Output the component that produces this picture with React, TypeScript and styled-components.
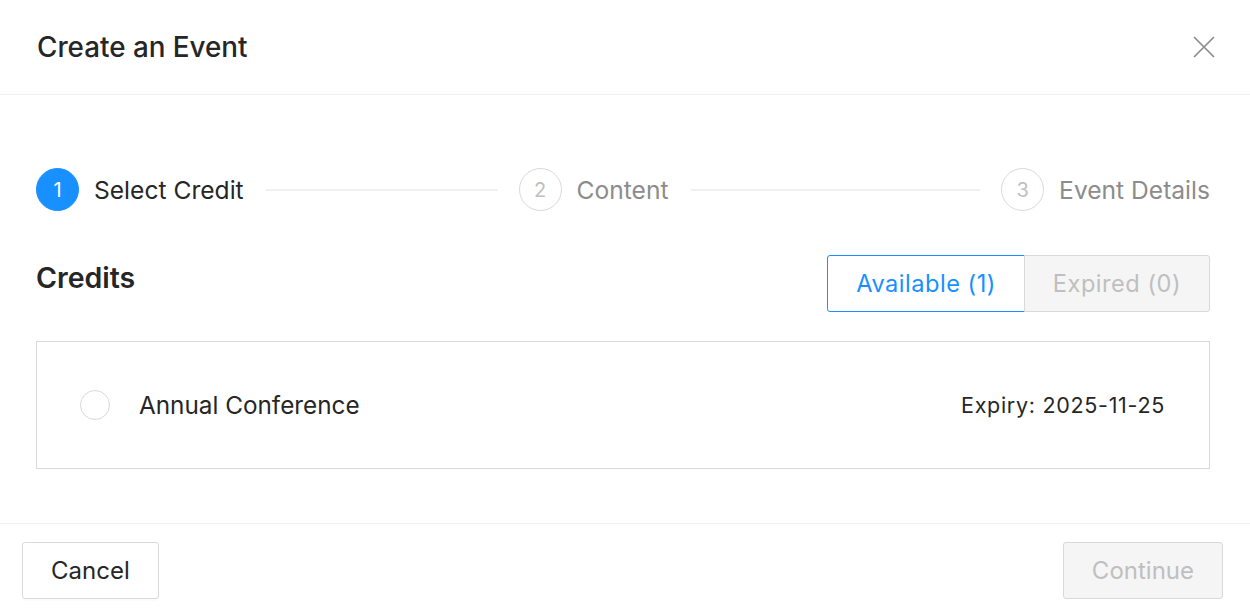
import React, { useState } from "react";
import styled, { createGlobalStyle } from "styled-components";

const GlobalStyle = createGlobalStyle`
  html, body {
    margin: 0;
    padding: 0;
    background: #fff;
  }
  body {
    font-family: Inter, "Noto Sans", "Liberation Sans", sans-serif;
    color: #262626;
  }
`;

const steps = [
  { id: 1, title: "Select Credit" },
  { id: 2, title: "Content" },
  { id: 3, title: "Event Details" },
];

const credits = [{ id: "c1", name: "Annual Conference", expiry: "2025-11-25" }];

const App = () => {
  const [tab, setTab] = useState<"available" | "expired">("available");
  const [selected, setSelected] = useState<string | null>(null);
  const current = 1;

  return (
    <>
      <GlobalStyle />
      <Modal>
        <Header>
          <Title>Create an Event</Title>
          <CloseButton aria-label="Close">
            <svg width="22" height="22" viewBox="0 0 22 22">
              <path
                d="M1 1 L21 21 M21 1 L1 21"
                stroke="#8c8c8c"
                strokeWidth="1.7"
                fill="none"
              />
            </svg>
          </CloseButton>
        </Header>

        <Body>
          <Steps>
            {steps.map((step, i) => (
              <Step key={step.id} $last={i === steps.length - 1}>
                <StepIcon $active={step.id === current}>{step.id}</StepIcon>
                <StepTitle $active={step.id === current}>{step.title}</StepTitle>
                {i < steps.length - 1 && <StepLine />}
              </Step>
            ))}
          </Steps>

          <SectionHead>
            <SectionTitle>Credits</SectionTitle>
            <Segmented>
              <SegmentButton
                $active={tab === "available"}
                onClick={() => setTab("available")}
              >
                Available (1)
              </SegmentButton>
              <SegmentButton $active={tab === "expired"} disabled>
                Expired (0)
              </SegmentButton>
            </Segmented>
          </SectionHead>

          {credits.map((credit) => (
            <CreditCard key={credit.id} onClick={() => setSelected(credit.id)}>
              <CreditLeft>
                <Radio $checked={selected === credit.id} />
                <CreditName>{credit.name}</CreditName>
              </CreditLeft>
              <Expiry>Expiry: {credit.expiry}</Expiry>
            </CreditCard>
          ))}
        </Body>

        <Footer>
          <Button>Cancel</Button>
          <Button disabled={!selected}>Continue</Button>
        </Footer>
      </Modal>
    </>
  );
};

export default App;

const Modal = styled.div`
  display: flex;
  flex-direction: column;
  width: 1250px;
  height: 616px;
  background: #fff;
`;

const Header = styled.div`
  display: flex;
  align-items: center;
  justify-content: space-between;
  height: 95px;
  padding: 0 35px 0 37px;
  border-bottom: 1px solid #f0f0f0;
  box-sizing: border-box;
`;

const Title = styled.h1`
  margin: 0;
  font-size: 27.8px;
  font-weight: 500;
  color: #262626;
`;

const CloseButton = styled.button`
  display: flex;
  align-items: center;
  justify-content: center;
  padding: 0;
  border: none;
  background: none;
  cursor: pointer;
`;

const Body = styled.div`
  display: flex;
  flex-direction: column;
  padding: 73px 40px 0 36px;
  flex: 1;
`;

const Steps = styled.div`
  display: flex;
  align-items: center;
  height: 43px;
`;

const Step = styled.div<{ $last?: boolean }>`
  display: flex;
  align-items: center;
  gap: 15px;
  flex: ${(p) => (p.$last ? "none" : "1")};
`;

const StepIcon = styled.span<{ $active?: boolean }>`
  display: flex;
  align-items: center;
  justify-content: center;
  flex: none;
  width: 43px;
  height: 43px;
  box-sizing: border-box;
  border-radius: 50%;
  font-size: 20px;
  background: ${(p) => (p.$active ? "#1890ff" : "#fff")};
  border: 1px solid ${(p) => (p.$active ? "#1890ff" : "#d9d9d9")};
  color: ${(p) => (p.$active ? "#fff" : "#bfbfbf")};
`;

const StepTitle = styled.span<{ $active?: boolean }>`
  font-size: 24.6px;
  color: ${(p) => (p.$active ? "#262626" : "#8c8c8c")};
`;

const StepLine = styled.div`
  flex: 1;
  height: 2px;
  background: #f0f0f0;
  margin: 0 21px 0 7px;
`;

const SectionHead = styled.div`
  display: flex;
  align-items: center;
  justify-content: space-between;
  margin-top: 44px;
`;

const SectionTitle = styled.h2`
  margin: 0;
  font-size: 28.5px;
  font-weight: 600;
  color: #262626;
  transform: translateY(-6px);
`;

const Segmented = styled.div`
  display: flex;
`;

const SegmentButton = styled.button<{ $active?: boolean }>`
  height: 57px;
  padding: 0 28px;
  font-family: inherit;
  font-size: 23.6px;
  letter-spacing: 0.5px;
  border: 1px solid ${(p) => (p.$active ? "#1890ff" : "#d9d9d9")};
  background: ${(p) => (p.$active ? "#fff" : "#f5f5f5")};
  color: ${(p) => (p.$active ? "#1890ff" : "#bfbfbf")};
  border-radius: ${(p) => (p.$active ? "3px 0 0 3px" : "0 3px 3px 0")};
  margin-left: ${(p) => (p.$active ? "0" : "-1px")};
  cursor: pointer;

  &:disabled {
    cursor: not-allowed;
  }
`;

const CreditCard = styled.div`
  display: flex;
  align-items: center;
  justify-content: space-between;
  height: 128px;
  margin-top: 29px;
  padding: 0 44px 0 43px;
  border: 1px solid #d9d9d9;
  box-sizing: border-box;
  cursor: pointer;
`;

const CreditLeft = styled.div`
  display: flex;
  align-items: center;
  gap: 29px;
`;

const Radio = styled.span<{ $checked?: boolean }>`
  width: 30px;
  height: 30px;
  box-sizing: border-box;
  border-radius: 50%;
  border: 1px solid ${(p) => (p.$checked ? "#1890ff" : "#d9d9d9")};
  background: #fff;
`;

const CreditName = styled.span`
  font-size: 24.3px;
  color: #262626;
`;

const Expiry = styled.span`
  font-size: 21.5px;
  letter-spacing: 0.7px;
  color: #262626;
`;

const Footer = styled.div`
  display: flex;
  align-items: flex-start;
  justify-content: space-between;
  height: 93px;
  padding: 18px 27px 0 22px;
  border-top: 1px solid #f0f0f0;
  box-sizing: border-box;
`;

const Button = styled.button`
  height: 57px;
  padding: 0 28px;
  font-family: inherit;
  font-size: 24px;
  color: #262626;
  background: #fff;
  border: 1px solid #d9d9d9;
  border-radius: 3px;
  box-shadow: 0 2px 0 rgba(0, 0, 0, 0.016);
  cursor: pointer;

  &:disabled {
    color: #bfbfbf;
    background: #f5f5f5;
    box-shadow: none;
    cursor: not-allowed;
  }
`;
